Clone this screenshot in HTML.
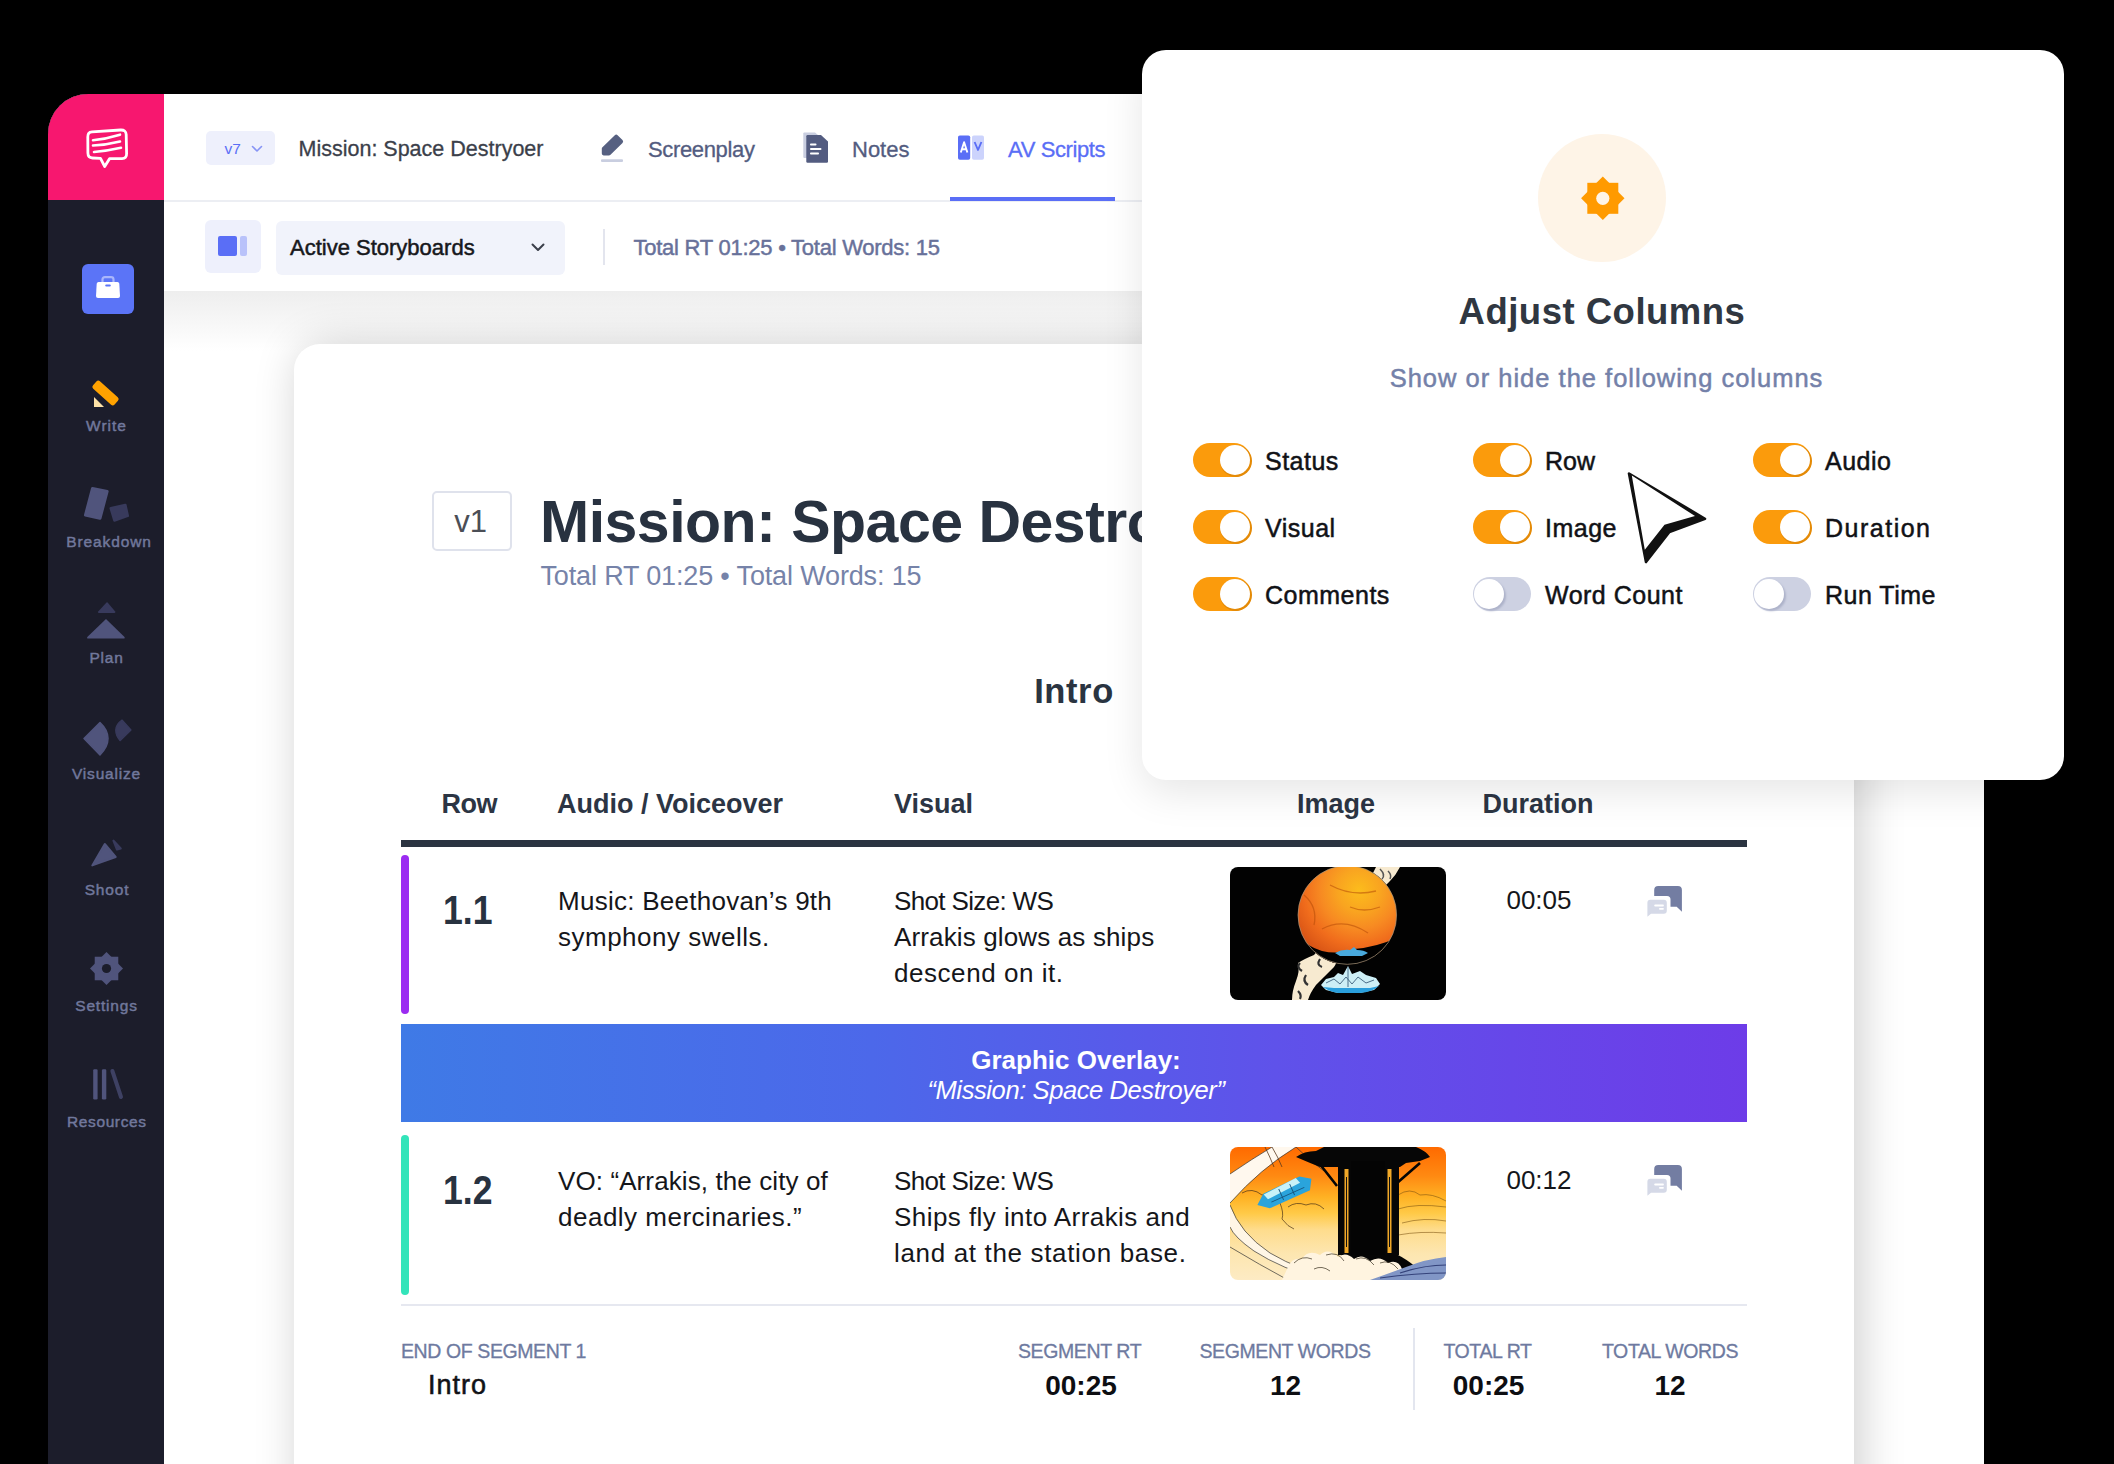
<!DOCTYPE html>
<html><head><meta charset="utf-8"><style>
html,body{margin:0;padding:0;}
body{width:2114px;height:1464px;background:#000;position:relative;overflow:hidden;font-family:"Liberation Sans", sans-serif;}
.t{position:absolute;white-space:nowrap;line-height:1;}
.r{position:absolute;}
svg.r{overflow:visible;}
</style></head><body>
<div class="r" style="left:48px;top:94px;width:1936px;height:1400px;background:#ffffff;border-top-left-radius:40px;"></div>
<div class="r" style="left:48px;top:94px;width:116px;height:1400px;background:#1c1d2b;border-top-left-radius:40px;"></div>
<div class="r" style="left:48px;top:94px;width:116px;height:106px;background:#f7176f;border-top-left-radius:40px;"></div>
<svg class="r" style="left:84px;top:126px" width="46" height="46" viewBox="0 0 46 46">
<path d="M3.8 11 Q3.5 6.2 8 5.8 L36.5 4 Q42 3.7 42.2 8.5 L42.6 27.5 Q42.8 32.5 38 32.6 L25.5 32.7 L20.7 40.5 L16.5 32.4 L8.5 32 Q4 31.8 3.9 27 Z" fill="none" stroke="#fff" stroke-width="2.8" stroke-linejoin="round"/>
<path d="M9 14.2 Q22 13 36 8.7 M9 19.5 Q22 19 36 15.5 M10 26 Q23 25 37 21.8" fill="none" stroke="#fff" stroke-width="2.6" stroke-linecap="round"/>
</svg>
<div class="r" style="left:82px;top:264px;width:52px;height:50px;background:#5b74f7;border-radius:6px;"></div>
<svg class="r" style="left:95px;top:276px" width="26" height="24" viewBox="0 0 26 24">
<path d="M7.5 6 V3.5 Q7.5 1.2 10 1.2 H16 Q18.5 1.2 18.5 3.5 V6" fill="none" stroke="#a9b6fb" stroke-width="2.2"/>
<path d="M3.5 6 H22.5 Q24 6 24.3 7.8 L25 20 Q25 22 23 22 H3 Q1 22 1 20 L1.7 7.8 Q2 6 3.5 6 Z" fill="#fff"/>
<rect x="10.2" y="8.6" width="5.6" height="2" rx="1" fill="#5b74f7"/>
</svg>
<svg class="r" style="left:88px;top:376px" width="36" height="36" viewBox="0 0 36 36">
<rect x="3" y="12" width="29" height="10" rx="2.5" transform="rotate(42 17.5 17)" fill="#ffa200"/>
<path d="M6 21 L6 31 L16 31 Z" fill="#fde2a8"/>
</svg>
<div class="t" style="top:417.88px;font-size:15.5px;font-weight:400;color:#71789c;letter-spacing:1.0px;left:-593.5px;width:1400px;text-align:center;-webkit-text-stroke:0.45px;">Write</div>
<svg class="r" style="left:80px;top:484px" width="52" height="42" viewBox="0 0 52 42">
<path d="M12.7 3 L27.6 6 Q29 6.3 28.6 7.8 L21.5 34.5 Q21.1 36 19.6 35.7 L5 32.5 Q3.6 32.2 4 30.8 L11 4.2 Q11.4 2.8 12.7 3 Z" fill="#50547c"/>
<path d="M30.5 23 L45 19.8 Q46.3 19.5 46.6 20.8 L49 31.5 Q49.3 32.8 48 33.1 L34.8 37.7 Q33.5 38 33.2 36.7 L29.5 24.5 Q29.2 23.3 30.5 23 Z" fill="#383a5c"/>
</svg>
<div class="t" style="top:533.88px;font-size:15.5px;font-weight:400;color:#71789c;letter-spacing:0.9px;left:-591px;width:1400px;text-align:center;-webkit-text-stroke:0.45px;">Breakdown</div>
<svg class="r" style="left:84px;top:600px" width="44" height="42" viewBox="0 0 44 42">
<path d="M22.5 2.5 Q23 2 23.6 2.5 L31.2 11.5 Q31.8 13 30.3 13 H15 Q13.5 13 14.2 11.5 Z" fill="#383a5c"/>
<path d="M22 19 L40.5 37 Q41.5 38.6 39.8 38.6 H4 Q2.3 38.6 3.3 37 Z" fill="#50547c"/>
</svg>
<div class="t" style="top:649.88px;font-size:15.5px;font-weight:400;color:#71789c;letter-spacing:0.8px;left:-593.5px;width:1400px;text-align:center;-webkit-text-stroke:0.45px;">Plan</div>
<svg class="r" style="left:80px;top:716px" width="56" height="44" viewBox="0 0 56 44">
<path d="M20 6.6 Q28 14 28 22.6 Q28 31 20 39 L4 22.6 Z" fill="#50547c" stroke="#50547c" stroke-width="1.5" stroke-linejoin="round"/>
<path d="M42 4 L51 14 L40 24.7 Q35.7 19.5 35.7 14 Q35.7 8.5 42 4 Z" fill="#383a5c" stroke="#383a5c" stroke-width="1.2" stroke-linejoin="round"/>
</svg>
<div class="t" style="top:765.88px;font-size:15.5px;font-weight:400;color:#71789c;letter-spacing:0.8px;left:-593.5px;width:1400px;text-align:center;-webkit-text-stroke:0.45px;">Visualize</div>
<svg class="r" style="left:88px;top:836px" width="40" height="34" viewBox="0 0 40 34">
<path d="M4.3 29.4 L16.8 8 L27.7 21 Z" fill="#50547c" stroke="#50547c" stroke-width="2" stroke-linejoin="round"/>
<path d="M25.5 4.7 L32.7 12.4 L29 13.5 Z" fill="#383a5c" stroke="#383a5c" stroke-width="2.2" stroke-linejoin="round"/>
</svg>
<div class="t" style="top:882.38px;font-size:15.5px;font-weight:400;color:#71789c;letter-spacing:0.8px;left:-593px;width:1400px;text-align:center;-webkit-text-stroke:0.45px;">Shoot</div>
<svg class="r" style="left:86px;top:948px" width="42" height="42" viewBox="0 0 42 42"><rect x="8.72" y="8.72" width="23.56" height="23.56" fill="#50547c"/><polygon points="20.5,4.0 37.0,20.5 20.5,37.0 4.0,20.5" fill="#50547c"/><circle cx="20.5" cy="20.5" r="4.6" fill="#1c1d2b"/></svg>
<div class="t" style="top:998.38px;font-size:15.5px;font-weight:400;color:#71789c;letter-spacing:0.8px;left:-593.5px;width:1400px;text-align:center;-webkit-text-stroke:0.45px;">Settings</div>
<svg class="r" style="left:88px;top:1064px" width="40" height="40" viewBox="0 0 40 40">
<rect x="5.2" y="5.3" width="4.4" height="30.2" rx="1.2" fill="#50547c"/>
<rect x="13.9" y="5.3" width="4.4" height="30.2" rx="1.2" fill="#50547c"/>
<path d="M24.4 7 L33 33" stroke="#3e4163" stroke-width="4" stroke-linecap="round"/>
</svg>
<div class="t" style="top:1113.88px;font-size:15.5px;font-weight:400;color:#71789c;letter-spacing:0.6px;left:-593.2px;width:1400px;text-align:center;-webkit-text-stroke:0.45px;">Resources</div>
<div class="r" style="left:164px;top:200px;width:1820px;height:2px;background:#eceef3;"></div>
<div class="r" style="left:206px;top:131px;width:69px;height:34px;background:#eef0fc;border-radius:5px;"></div>
<div class="t" style="top:140.88px;font-size:15.5px;font-weight:400;color:#5a6ef6;left:224.5px;">v7</div>
<svg class="r" style="left:250px;top:143px" width="14" height="10" viewBox="0 0 14 10"><path d="M2.5 3.5 L7 8 L11.5 3.5" fill="none" stroke="#8794f5" stroke-width="1.6" stroke-linecap="round" stroke-linejoin="round"/></svg>
<div class="t" style="top:138.60px;font-size:21.5px;font-weight:400;color:#3b3f4a;left:298.5px;-webkit-text-stroke:0.3px;">Mission: Space Destryoer</div>
<svg class="r" style="left:598px;top:134px" width="30" height="30" viewBox="0 0 30 30">
<path d="M4.2 13.6 L16.8 1.2 Q18.2 -0.2 19.6 1.2 L24.5 6.1 Q25.9 7.5 24.5 8.9 L12.5 20.8 Q11.8 21.4 10.8 21.4 H5.6 Q3.8 21.4 3.8 19.6 V14.8 Q3.8 14 4.2 13.6 Z" fill="#566081"/>
<rect x="3" y="25.2" width="22" height="2.8" rx="1" fill="#c9cee0"/>
</svg>
<div class="t" style="top:138.68px;font-size:22px;font-weight:400;color:#535c80;letter-spacing:-0.35px;left:648px;-webkit-text-stroke:0.3px;">Screenplay</div>
<svg class="r" style="left:800px;top:130px" width="34" height="36" viewBox="0 0 34 36">
<path d="M3.3 3.5 Q3.3 2.6 4.3 2.6 H15 L18 5 V28 H4.3 Q3.3 28 3.3 27 Z" fill="#c9cee0"/>
<path d="M7.5 5 H21 L28 11.5 V31.5 Q28 32.7 26.8 32.7 H7.5 Q6.3 32.7 6.3 31.5 V6.2 Q6.3 5 7.5 5 Z" fill="#535c80"/>
<rect x="10" y="13.5" width="6.5" height="1.9" rx="0.9" fill="#fff"/>
<rect x="10" y="18" width="11.5" height="1.9" rx="0.9" fill="#fff"/>
<rect x="10" y="22.5" width="9" height="1.9" rx="0.9" fill="#fff"/>
</svg>
<div class="t" style="top:138.68px;font-size:22px;font-weight:400;color:#535c80;left:852px;-webkit-text-stroke:0.3px;">Notes</div>
<svg class="r" style="left:956px;top:134px" width="32" height="28" viewBox="0 0 32 28">
<rect x="2" y="1.5" width="12.2" height="24.3" rx="1.8" fill="#5a6ef6"/>
<rect x="16" y="1.5" width="12" height="24.3" rx="1.8" fill="#ccd3fc"/>
<path d="M4.8 18.5 L8.1 8.2 L11.4 18.5 M6 15.2 H10.2" fill="none" stroke="#fff" stroke-width="1.9" stroke-linejoin="round"/>
<path d="M18.6 8 L22 16 L25.4 8" fill="none" stroke="#5a6ef6" stroke-width="1.9" stroke-linejoin="round"/>
</svg>
<div class="t" style="top:138.68px;font-size:22px;font-weight:400;color:#5a6ef6;letter-spacing:-0.4px;left:1008px;-webkit-text-stroke:0.3px;">AV Scripts</div>
<div class="r" style="left:950px;top:197px;width:165px;height:4px;background:#5a6ef6;"></div>
<div class="r" style="left:205px;top:220px;width:56px;height:53px;background:#eef0fc;border-radius:6px;"></div>
<div class="r" style="left:218px;top:236px;width:19px;height:20px;background:#5a6ef6;border-radius:2px;"></div>
<div class="r" style="left:240px;top:236px;width:7px;height:20px;background:#b9c2fa;border-radius:2px;"></div>
<div class="r" style="left:276px;top:221px;width:289px;height:54px;background:#f1f3fb;border-radius:6px;"></div>
<div class="t" style="top:237.38px;font-size:22px;font-weight:400;color:#17181c;left:290px;-webkit-text-stroke:0.5px;">Active Storyboards</div>
<svg class="r" style="left:528px;top:240px" width="20" height="16" viewBox="0 0 20 16"><path d="M4.5 4.5 L10 10 L15.5 4.5" fill="none" stroke="#3b3f4a" stroke-width="2" stroke-linecap="round" stroke-linejoin="round"/></svg>
<div class="r" style="left:603px;top:229px;width:2px;height:36px;background:#e3e5ee;"></div>
<div class="t" style="top:237.38px;font-size:22px;font-weight:400;color:#68719a;letter-spacing:-0.25px;left:633.5px;-webkit-text-stroke:0.45px;">Total RT 01:25 &bull; Total Words: 15</div>
<div class="r" style="left:164px;top:291px;width:1820px;height:60px;background:linear-gradient(#eeeeee, rgba(255,255,255,0));"></div>
<div class="r" style="left:294px;top:344px;width:1560px;height:1200px;background:#fff;border-radius:26px;box-shadow:6px 2px 46px rgba(0,0,0,0.2);"></div>
<div class="r" style="left:432px;top:491px;width:80px;height:60px;background:#fff;box-sizing:border-box;border:2.5px solid #dfe2ec;border-radius:5px;"></div>
<div class="t" style="top:505.76px;font-size:31px;font-weight:400;color:#4b4e56;left:-229.5px;width:1400px;text-align:center;">v1</div>
<div class="t" style="top:493.06px;font-size:59px;font-weight:700;color:#283240;letter-spacing:-0.5px;left:540px;">Mission: Space Destroyer</div>
<div class="t" style="top:563.34px;font-size:27px;font-weight:400;color:#7683a9;letter-spacing:-0.15px;left:540.5px;">Total RT 01:25 &bull; Total Words: 15</div>
<div class="t" style="top:673.80px;font-size:34.5px;font-weight:700;color:#2a3441;letter-spacing:0.6px;left:374px;width:1400px;text-align:center;">Intro</div>
<div class="t" style="top:791.14px;font-size:27px;font-weight:700;color:#2c3544;letter-spacing:-0.5px;left:441.5px;">Row</div>
<div class="t" style="top:791.14px;font-size:27px;font-weight:700;color:#2c3544;left:557px;">Audio / Voiceover</div>
<div class="t" style="top:791.14px;font-size:27px;font-weight:700;color:#2c3544;left:894px;">Visual</div>
<div class="t" style="top:791.14px;font-size:27px;font-weight:700;color:#2c3544;left:636px;width:1400px;text-align:center;">Image</div>
<div class="t" style="top:791.14px;font-size:27px;font-weight:700;color:#2c3544;left:838px;width:1400px;text-align:center;">Duration</div>
<div class="r" style="left:401px;top:840px;width:1346px;height:6.5px;background:#2b3441;"></div>
<div class="r" style="left:401px;top:855px;width:8px;height:159px;background:#9b2bf1;border-radius:4px;"></div>
<div class="t" style="top:890.34px;font-size:40px;font-weight:700;color:#283240;left:442.5px;transform:scaleX(0.89);transform-origin:0 0;">1.1</div>
<div class="t" style="top:887.99px;font-size:26px;font-weight:400;color:#15161a;letter-spacing:0.26px;left:558px;">Music: Beethovan&rsquo;s 9th</div>
<div class="t" style="top:923.99px;font-size:26px;font-weight:400;color:#15161a;letter-spacing:0.5px;left:558px;">symphony swells.</div>
<div class="t" style="top:887.99px;font-size:26px;font-weight:400;color:#15161a;letter-spacing:-0.65px;left:894px;">Shot Size: WS</div>
<div class="t" style="top:923.99px;font-size:26px;font-weight:400;color:#15161a;letter-spacing:0.14px;left:894px;">Arrakis glows as ships</div>
<div class="t" style="top:959.99px;font-size:26px;font-weight:400;color:#15161a;letter-spacing:0.55px;left:894px;">descend on it.</div>
<div class="t" style="top:887.49px;font-size:26px;font-weight:400;color:#15161a;left:839px;width:1400px;text-align:center;">00:05</div>
<div class="r" style="left:401px;top:1024px;width:1346px;height:98px;background:linear-gradient(90deg,#3f7ae6 0%,#4c68ea 35%,#5f52ea 65%,#6d3ce8 100%);"></div>
<div class="t" style="top:1046.79px;font-size:26px;font-weight:700;color:#fff;left:376px;width:1400px;text-align:center;">Graphic Overlay:</div>
<div class="t" style="top:1078.41px;font-size:25.5px;font-weight:400;color:#fff;letter-spacing:-0.4px;font-style:italic;left:376px;width:1400px;text-align:center;">&ldquo;Mission: Space Destroyer&rdquo;</div>
<div class="r" style="left:401px;top:1135px;width:8px;height:160px;background:#33e4ba;border-radius:4px;"></div>
<div class="t" style="top:1170.14px;font-size:40px;font-weight:700;color:#283240;left:442.5px;transform:scaleX(0.89);transform-origin:0 0;">1.2</div>
<div class="t" style="top:1167.99px;font-size:26px;font-weight:400;color:#15161a;letter-spacing:0.1px;left:558px;">VO: &ldquo;Arrakis, the city of</div>
<div class="t" style="top:1203.99px;font-size:26px;font-weight:400;color:#15161a;letter-spacing:0.5px;left:558px;">deadly mercinaries.&rdquo;</div>
<div class="t" style="top:1167.99px;font-size:26px;font-weight:400;color:#15161a;letter-spacing:-0.65px;left:894px;">Shot Size: WS</div>
<div class="t" style="top:1203.99px;font-size:26px;font-weight:400;color:#15161a;letter-spacing:0.44px;left:894px;">Ships fly into Arrakis and</div>
<div class="t" style="top:1239.99px;font-size:26px;font-weight:400;color:#15161a;letter-spacing:0.66px;left:894px;">land at the station base.</div>
<div class="t" style="top:1166.99px;font-size:26px;font-weight:400;color:#15161a;left:839px;width:1400px;text-align:center;">00:12</div>
<div class="r" style="left:401px;top:1304px;width:1346px;height:2px;background:#e6e8f0;"></div>
<svg class="r" style="left:1645px;top:884px" width="40" height="34" viewBox="0 0 40 34">
<path d="M13.2 2.1 H32.9 Q36.9 2.1 36.9 6.1 V27.7 L31.7 22.8 H25.5 V15.5 Q25.5 12 22 12 H9.2 V6.1 Q9.2 2.1 13.2 2.1 Z" fill="#737da2"/>
<path d="M5.3 15.8 H18.8 Q21.8 15.8 21.8 18.8 V26.8 Q21.8 29.8 18.8 29.8 H6 L2.4 32.8 V18.8 Q2.4 15.8 5.3 15.8 Z" fill="#d5d9e7"/>
<rect x="9.2" y="20.6" width="9.7" height="1.8" rx="0.9" fill="#fff"/>
<rect x="14" y="23.9" width="4.9" height="1.8" rx="0.9" fill="#fff"/>
</svg>
<svg class="r" style="left:1645px;top:1163px" width="40" height="34" viewBox="0 0 40 34">
<path d="M13.2 2.1 H32.9 Q36.9 2.1 36.9 6.1 V27.7 L31.7 22.8 H25.5 V15.5 Q25.5 12 22 12 H9.2 V6.1 Q9.2 2.1 13.2 2.1 Z" fill="#737da2"/>
<path d="M5.3 15.8 H18.8 Q21.8 15.8 21.8 18.8 V26.8 Q21.8 29.8 18.8 29.8 H6 L2.4 32.8 V18.8 Q2.4 15.8 5.3 15.8 Z" fill="#d5d9e7"/>
<rect x="9.2" y="20.6" width="9.7" height="1.8" rx="0.9" fill="#fff"/>
<rect x="14" y="23.9" width="4.9" height="1.8" rx="0.9" fill="#fff"/>
</svg>
<div class="t" style="top:1342.29px;font-size:19.5px;font-weight:400;color:#6e7aa0;letter-spacing:-0.4px;left:401px;-webkit-text-stroke:0.3px;">END OF SEGMENT 1</div>
<div class="t" style="top:1372.14px;font-size:27px;font-weight:400;color:#111216;letter-spacing:1.0px;left:428px;-webkit-text-stroke:0.55px;">Intro</div>
<div class="t" style="top:1342.09px;font-size:19.5px;font-weight:400;color:#6e7aa0;letter-spacing:-0.4px;left:379.5999999999999px;width:1400px;text-align:center;-webkit-text-stroke:0.3px;">SEGMENT RT</div>
<div class="t" style="top:1372.00px;font-size:28px;font-weight:700;color:#0d0e12;left:381px;width:1400px;text-align:center;">00:25</div>
<div class="t" style="top:1342.09px;font-size:19.5px;font-weight:400;color:#6e7aa0;letter-spacing:-0.4px;left:585px;width:1400px;text-align:center;-webkit-text-stroke:0.3px;">SEGMENT WORDS</div>
<div class="t" style="top:1372.00px;font-size:28px;font-weight:700;color:#0d0e12;left:585.5999999999999px;width:1400px;text-align:center;">12</div>
<div class="r" style="left:1413px;top:1328px;width:2px;height:82px;background:#e3e6ef;"></div>
<div class="t" style="top:1342.09px;font-size:19.5px;font-weight:400;color:#6e7aa0;letter-spacing:-0.4px;left:787.5px;width:1400px;text-align:center;-webkit-text-stroke:0.3px;">TOTAL RT</div>
<div class="t" style="top:1372.00px;font-size:28px;font-weight:700;color:#0d0e12;left:788.5999999999999px;width:1400px;text-align:center;">00:25</div>
<div class="t" style="top:1342.09px;font-size:19.5px;font-weight:400;color:#6e7aa0;letter-spacing:-0.4px;left:970px;width:1400px;text-align:center;-webkit-text-stroke:0.3px;">TOTAL WORDS</div>
<div class="t" style="top:1372.00px;font-size:28px;font-weight:700;color:#0d0e12;left:970px;width:1400px;text-align:center;">12</div>
<div class="r" style="left:1142px;top:50px;width:922px;height:730px;background:#fff;border-radius:24px;box-shadow:0 12px 40px rgba(0,0,0,0.10);"></div>
<div class="r" style="left:1538px;top:134px;width:128px;height:128px;border-radius:50%;background:#fef4e7;"></div>
<svg class="r" style="left:1578px;top:174px" width="48" height="48" viewBox="0 0 48 48"><rect x="9.31" y="8.81" width="30.99" height="30.99" fill="#ff9a00"/><polygon points="24.8,2.6000000000000014 46.5,24.3 24.8,46.0 3.1000000000000014,24.3" fill="#ff9a00"/><circle cx="24.8" cy="24.3" r="6.6" fill="#fef4e7"/></svg>
<div class="t" style="top:293.90px;font-size:36.5px;font-weight:700;color:#303741;letter-spacing:0.5px;left:902px;width:1400px;text-align:center;">Adjust Columns</div>
<div class="t" style="top:366.01px;font-size:25.5px;font-weight:400;color:#7481a9;letter-spacing:1.0px;left:906.5px;width:1400px;text-align:center;-webkit-text-stroke:0.5px;">Show or hide the following columns</div>
<div class="r" style="left:1193px;top:443px;width:58px;height:34px;background:#fb9b0c;border-radius:17px;"></div>
<div class="r" style="left:1220px;top:445px;width:30px;height:30px;background:#fff;border-radius:50%;box-shadow:1px 1px 0 1px #e48a06;"></div>
<div class="t" style="top:448.84px;font-size:25px;font-weight:400;color:#111216;letter-spacing:0.5px;left:1265px;-webkit-text-stroke:0.5px;">Status</div>
<div class="r" style="left:1193px;top:510px;width:58px;height:34px;background:#fb9b0c;border-radius:17px;"></div>
<div class="r" style="left:1220px;top:512px;width:30px;height:30px;background:#fff;border-radius:50%;box-shadow:1px 1px 0 1px #e48a06;"></div>
<div class="t" style="top:515.84px;font-size:25px;font-weight:400;color:#111216;letter-spacing:0.5px;left:1265px;-webkit-text-stroke:0.5px;">Visual</div>
<div class="r" style="left:1193px;top:577px;width:58px;height:34px;background:#fb9b0c;border-radius:17px;"></div>
<div class="r" style="left:1220px;top:579px;width:30px;height:30px;background:#fff;border-radius:50%;box-shadow:1px 1px 0 1px #e48a06;"></div>
<div class="t" style="top:582.84px;font-size:25px;font-weight:400;color:#111216;letter-spacing:0.5px;left:1265px;-webkit-text-stroke:0.5px;">Comments</div>
<div class="r" style="left:1473px;top:443px;width:58px;height:34px;background:#fb9b0c;border-radius:17px;"></div>
<div class="r" style="left:1500px;top:445px;width:30px;height:30px;background:#fff;border-radius:50%;box-shadow:1px 1px 0 1px #e48a06;"></div>
<div class="t" style="top:448.84px;font-size:25px;font-weight:400;color:#111216;left:1545px;-webkit-text-stroke:0.5px;">Row</div>
<div class="r" style="left:1473px;top:510px;width:58px;height:34px;background:#fb9b0c;border-radius:17px;"></div>
<div class="r" style="left:1500px;top:512px;width:30px;height:30px;background:#fff;border-radius:50%;box-shadow:1px 1px 0 1px #e48a06;"></div>
<div class="t" style="top:515.84px;font-size:25px;font-weight:400;color:#111216;letter-spacing:0.5px;left:1545px;-webkit-text-stroke:0.5px;">Image</div>
<div class="r" style="left:1473px;top:577px;width:58px;height:34px;background:#cdd1e2;border-radius:17px;"></div>
<div class="r" style="left:1474px;top:579px;width:30px;height:30px;background:#fff;border-radius:50%;box-shadow:2px 2px 2px #aeb3ca;"></div>
<div class="t" style="top:582.84px;font-size:25px;font-weight:400;color:#111216;letter-spacing:0.5px;left:1545px;-webkit-text-stroke:0.5px;">Word Count</div>
<div class="r" style="left:1753px;top:443px;width:58px;height:34px;background:#fb9b0c;border-radius:17px;"></div>
<div class="r" style="left:1780px;top:445px;width:30px;height:30px;background:#fff;border-radius:50%;box-shadow:1px 1px 0 1px #e48a06;"></div>
<div class="t" style="top:448.84px;font-size:25px;font-weight:400;color:#111216;letter-spacing:0.5px;left:1825px;-webkit-text-stroke:0.5px;">Audio</div>
<div class="r" style="left:1753px;top:510px;width:58px;height:34px;background:#fb9b0c;border-radius:17px;"></div>
<div class="r" style="left:1780px;top:512px;width:30px;height:30px;background:#fff;border-radius:50%;box-shadow:1px 1px 0 1px #e48a06;"></div>
<div class="t" style="top:515.84px;font-size:25px;font-weight:400;color:#111216;letter-spacing:1.5px;left:1825px;-webkit-text-stroke:0.5px;">Duration</div>
<div class="r" style="left:1753px;top:577px;width:58px;height:34px;background:#cdd1e2;border-radius:17px;"></div>
<div class="r" style="left:1754px;top:579px;width:30px;height:30px;background:#fff;border-radius:50%;box-shadow:2px 2px 2px #aeb3ca;"></div>
<div class="t" style="top:582.84px;font-size:25px;font-weight:400;color:#111216;letter-spacing:0.5px;left:1825px;-webkit-text-stroke:0.5px;">Run Time</div>
<svg class="r" style="left:1600px;top:450px" width="130" height="130" viewBox="0 0 130 130">
<path d="M29 23.5 L105 68.8 L69.4 82 L46 112 Z" fill="#111" stroke="#111" stroke-width="2.6" stroke-linejoin="round"/>
<path d="M31.8 25.6 L95 66 L64.5 74.7 L44.8 99.8 Z" fill="#fff"/>
</svg>
<svg class="r" style="left:1230px;top:867px" width="216" height="133" viewBox="0 0 216 133">
<defs>
<clipPath id="c1"><rect width="216" height="133" rx="8"/></clipPath>
<radialGradient id="pg1" cx="0.62" cy="0.25" r="0.78">
<stop offset="0" stop-color="#fcbc1c"/>
<stop offset="0.28" stop-color="#f9a420"/>
<stop offset="0.5" stop-color="#f78a22"/>
<stop offset="0.72" stop-color="#f06c1c"/>
<stop offset="1" stop-color="#d24e14"/>
</radialGradient>
<clipPath id="pc1"><circle cx="117.3" cy="48" r="49.5"/></clipPath>
</defs>
<g clip-path="url(#c1)">
<rect width="216" height="133" fill="#020202"/>
<path d="M146 0 L170 0 Q166 8 160 14 L150 24 L120 60 L100 86 Q110 92 104 100 Q96 108 86 118 Q80 126 78 133 L62 133 Q62 124 66 114 Q70 104 68 96 Q74 92 84 88 L128 36 Z" fill="#f7ead0"/>
<path d="M70 96 Q66 100 72 104 M76 108 Q72 114 78 118 M90 92 Q86 98 92 100 M68 124 Q72 128 70 132" stroke="#333" stroke-width="2.2" fill="none"/>
<path d="M150 2 Q156 8 152 12 M158 4 Q162 8 160 12" stroke="#555" stroke-width="1.5" fill="none"/>
<circle cx="117.3" cy="48" r="49.5" fill="#000"/>
<g clip-path="url(#pc1)">
<circle cx="117.3" cy="48" r="49.5" fill="url(#pg1)"/>
<path d="M62 60 Q72 78 92 84 Q108 88 124 82 Q148 80 168 70 L170 110 L60 110 Z" fill="#000"/>
<path d="M74 28 Q88 40 84 58 M100 18 Q122 30 146 24 M92 62 Q114 50 138 66 M120 40 Q134 46 150 40" stroke="#b44a08" stroke-width="1.3" fill="none" opacity="0.55"/>
</g>
<circle cx="117.3" cy="48" r="49.3" fill="none" stroke="#9d8f78" stroke-width="0.9" opacity="0.8"/>
<path d="M105 86 Q112 82 120 83 L124 80 L127 83 Q134 83 138 86 L132 89 L110 89 Z" fill="#49a9dc"/>
<path d="M91 118 L96 112 L104 110 L108 106 L113 108 L118 99 L122 107 L130 104 L136 108 L146 111 L150 117 L144 123 L130 126 L108 126 L96 123 Z" fill="#cdeff6"/>
<path d="M93 120 Q100 125 108 126 L130 126 Q142 125 149 119 L140 121 L104 121 Z" fill="#2a9fdc"/>
<path d="M96 116 L104 112 L110 117 L116 110 L122 117 L128 110 L136 116 L144 113 M118 100 L118 120" stroke="#4b6e88" stroke-width="1" fill="none"/>
</g>
</svg>
<svg class="r" style="left:1230px;top:1147px" width="216" height="133" viewBox="0 0 216 133">
<defs>
<clipPath id="c2"><rect width="216" height="133" rx="8"/></clipPath>
<linearGradient id="sky2" x1="0" y1="0" x2="0" y2="1">
<stop offset="0" stop-color="#ff6a00"/>
<stop offset="0.22" stop-color="#ff8a12"/>
<stop offset="0.38" stop-color="#ffb224"/>
<stop offset="0.5" stop-color="#ffca48"/>
<stop offset="0.62" stop-color="#fedc8c"/>
<stop offset="0.8" stop-color="#fde6b0"/>
<stop offset="1" stop-color="#fdebc4"/>
</linearGradient>
</defs>
<g clip-path="url(#c2)">
<rect width="216" height="133" fill="url(#sky2)"/>
<path d="M0 27 Q22 12 42 0 L66 0 Q30 22 0 56 Z" fill="#fff8ee"/>
<path d="M35 0 Q40 10 44 20 M42 0 Q48 10 52 20" stroke="#5a3a20" stroke-width="0.8" fill="none"/>
<path d="M0 27 Q22 12 42 0 M0 56 Q30 22 66 0 M66 0 Q80 14 94 24" stroke="#333" stroke-width="0.7" fill="none"/>
<path d="M0 58 Q10 86 40 106 Q70 124 112 133 L92 133 Q52 122 24 104 Q4 90 0 80 Z" fill="#fff6e6"/>
<path d="M0 80 Q4 90 24 104 Q52 122 92 133 M0 58 Q10 86 40 106 Q70 124 112 133" stroke="#333" stroke-width="0.7" fill="none"/>
<path d="M0 100 Q30 118 58 133" stroke="#333" stroke-width="0.7" fill="none"/>
<path d="M12 46 Q22 40 32 48 Q44 44 50 56 Q54 66 52 72 Q58 80 64 82 M58 60 Q66 54 76 58 Q86 54 94 62" stroke="#4a3418" stroke-width="0.7" fill="none"/>
<path d="M168 48 Q180 40 190 48 Q202 46 216 54 M168 62 Q186 56 216 60 M172 76 Q194 70 216 74 M168 88 Q190 84 216 86" stroke="#7a5010" stroke-width="0.7" fill="none" opacity="0.8"/>
<path d="M66 10 Q74 4 86 4 L94 0 L186 0 Q196 4 200 10 L190 14 L176 16 L170 20 L90 20 Q80 16 66 10 Z" fill="#060606"/>
<path d="M89 16 L107 39 M190 16 L159 43" stroke="#060606" stroke-width="2.6"/>
<path d="M108 18 H121 V108 H108 Z M155 18 H169 V108 H155 Z" fill="#060606"/>
<path d="M121 14 H155 V110 H121 Z" fill="#040404"/>
<rect x="114.5" y="22" width="4" height="84" fill="#f0a828"/><rect x="157.5" y="22" width="4" height="84" fill="#f0a828"/><path d="M116.5 30 V100 M159.5 30 V100" stroke="#111" stroke-width="1"/>
<path d="M104 122 Q104 112 112 108 L168 108 Q176 112 186 120 L187 126 L104 126 Z" fill="#050505"/>
<path d="M58 120 Q62 110 72 112 Q78 102 90 108 Q98 100 108 110 Q116 104 124 112 Q132 106 140 114 Q150 108 158 116 Q168 112 172 122 L176 133 L52 133 Z" fill="#fff4e0"/>
<path d="M64 116 Q72 108 82 112 M96 108 Q108 104 114 114 M126 112 Q136 108 144 118 M150 116 Q160 112 168 122 M84 122 Q92 118 100 124" stroke="#3a3020" stroke-width="0.7" fill="none"/>
<path d="M176 120 Q196 112 216 110 L216 133 L140 133 Q160 126 176 120 Z" fill="#8196c6"/>
<path d="M170 126 Q194 118 216 118 M150 131 Q186 126 216 126" stroke="#34427a" stroke-width="1.2" fill="none"/>
<g transform="rotate(-24 54 44)">
<path d="M24 46 L34 38 L74 37 L84 44 L78 54 L34 54 Z" fill="#2aa4dc"/>
<path d="M34 39 L70 37 L72 43 L36 45 Z" fill="#c8f2f8"/>
<path d="M38 49 L74 49 M50 40 V52 M62 40 V52" stroke="#17557e" stroke-width="0.9"/>
</g>
</g>
</svg>
</body></html>
